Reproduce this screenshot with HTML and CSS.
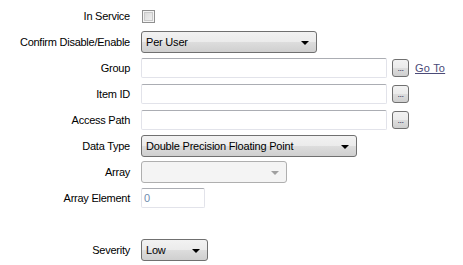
FILE: index.html
```html
<!DOCTYPE html>
<html>
<head>
<meta charset="utf-8">
<link rel="stylesheet" href="styles.css">
</head>
<body>
<div class="form">
  <div class="label">In Service</div>
  <div class="ctrl"><span class="check"></span></div>

  <div class="label">Confirm Disable/Enable</div>
  <div class="ctrl"><div class="combo w176"><span class="val">Per User</span><span class="arrow"></span></div></div>

  <div class="label">Group</div>
  <div class="ctrl"><div class="text w246"></div><div class="btn">...</div><a class="link" href="#">Go To</a></div>

  <div class="label">Item ID</div>
  <div class="ctrl"><div class="text w246"></div><div class="btn">...</div></div>

  <div class="label">Access Path</div>
  <div class="ctrl"><div class="text w246"></div><div class="btn">...</div></div>

  <div class="label">Data Type</div>
  <div class="ctrl"><div class="combo w216"><span class="val">Double Precision Floating Point</span><span class="arrow"></span></div></div>

  <div class="label">Array</div>
  <div class="ctrl"><div class="combo disabled w146"><span class="val"></span><span class="arrow"></span></div></div>

  <div class="label">Array Element</div>
  <div class="ctrl"><div class="text w64"><span class="num">0</span></div></div>

  <div class="label"></div>
  <div class="ctrl"></div>

  <div class="label">Severity</div>
  <div class="ctrl"><div class="combo w67"><span class="val">Low</span><span class="arrow"></span></div></div>
</div>
</body>
</html>
```

FILE: styles.css
```css
html, body {
  margin: 0;
  padding: 0;
  background: #ffffff;
}
body {
  font-family: "Liberation Sans", Arial, sans-serif;
  font-size: 11px;
  color: #000;
}
.form {
  display: grid;
  grid-template-columns: 130px auto;
  grid-auto-rows: 26px;
  column-gap: 11px;
  padding-top: 3px;
  align-items: center;
}
.label {
  text-align: right;
  white-space: nowrap;
  letter-spacing: -0.25px;
}
.ctrl {
  display: flex;
  align-items: center;
  height: 26px;
}
.check {
  display: block;
  width: 11px;
  height: 11px;
  margin-left: 1px;
  border: 1px solid #8f8f8f;
  background: linear-gradient(135deg, #d6d6d6, #f4f4f4);
  box-shadow: inset 0 0 0 1px #f4f4f4, inset 0 0 0 2px #c9c9c9;
}
.combo {
  box-sizing: border-box;
  height: 22px;
  border: 1px solid #707070;
  border-radius: 3px;
  background: linear-gradient(#f2f2f2 0%, #ebebeb 50%, #dddddd 51%, #cfcfcf 100%);
  display: flex;
  align-items: center;
  position: relative;
  padding-left: 4px;
}
.combo .val {
  flex: 1;
  white-space: nowrap;
  letter-spacing: -0.2px;
}
.combo .arrow {
  width: 0;
  height: 0;
  border-left: 4px solid transparent;
  border-right: 4px solid transparent;
  border-top: 4px solid #000;
  margin-right: 7px;
  margin-top: 1px;
}
.combo.disabled {
  border-color: #afafaf;
  background: #f4f4f4;
}
.combo.disabled .arrow {
  border-top-color: #a0a0a0;
}
.text {
  box-sizing: border-box;
  height: 20px;
  border: 1px solid #e2e3ea;
  border-top-color: #abadb3;
  border-radius: 2px;
  background: #fff;
  display: flex;
  align-items: center;
  padding-left: 2px;
}
.num {
  color: #6f8bb0;
}
.btn {
  box-sizing: border-box;
  width: 17px;
  height: 18px;
  margin-left: 5px;
  border: 1px solid #707070;
  border-radius: 3px;
  background: linear-gradient(#f2f2f2 0%, #ebebeb 50%, #dddddd 51%, #cfcfcf 100%);
  font-size: 9px;
  line-height: 9px;
  color: #1c2f5c;
  display: flex;
  align-items: flex-end;
  justify-content: center;
  padding-bottom: 3px;
  letter-spacing: -0.5px;
}
.link {
  margin-left: 6px;
  color: #4b4b78;
  text-decoration: underline;
  letter-spacing: 0.2px;
}
.w176 { width: 176px; }
.w216 { width: 216px; }
.w146 { width: 146px; }
.w67 { width: 67px; }
.w246 { width: 246px; }
.w64 { width: 64px; }
```
